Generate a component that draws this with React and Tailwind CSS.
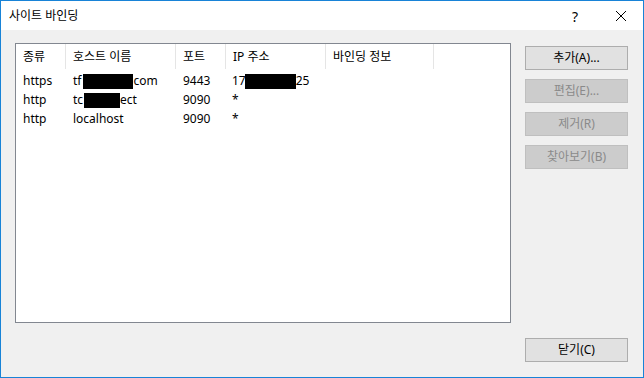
import React from 'react';

const font = { fontFamily: '"Noto Sans", "Noto Sans CJK KR", sans-serif' };

const columns = [
  { label: '종류', w: 'w-[50px]' },
  { label: '호스트 이름', w: 'w-[110px]' },
  { label: '포트', w: 'w-[50px]' },
  { label: 'IP 주소', w: 'w-[100px]' },
  { label: '바인딩 정보', w: 'w-[108px]' },
];

const Redact = ({ w }) => (
  <span className={`inline-block h-[15px] bg-black align-middle ${w}`} />
);

const rows = [
  {
    type: 'https',
    host: (
      <>
        tf<Redact w="w-[50px] ml-[2px]" />com
      </>
    ),
    port: '9443',
    ip: (
      <>
        17<Redact w="w-[51px] -ml-[1px]" />25
      </>
    ),
  },
  {
    type: 'http',
    host: (
      <>
        tc<Redact w="w-[36px] ml-[1px]" />ect
      </>
    ),
    port: '9090',
    ip: '*',
  },
  { type: 'http', host: 'localhost', port: '9090', ip: '*' },
];

const Button = ({ children, disabled }) => (
  <button
    className={`h-[24px] w-[103px] border text-[12px] leading-none ${
      disabled
        ? 'border-[#bfbfbf] bg-[#cccccc] text-[#8a8a8a]'
        : 'border-[#adadad] bg-[#e1e1e1] text-black'
    }`}
  >
    {children}
  </button>
);

export default function App() {
  return (
    <div
      className="flex h-[378px] w-[644px] flex-col border border-[#1883d7] bg-[#f0f0f0] text-[12px] text-black"
      style={font}
    >
      {/* title bar */}
      <div className="flex h-[29px] items-center bg-white pl-[8px] pt-[1px]">
        <span className="flex-1">사이트 바인딩</span>
        <span className="mr-[37px] text-[14px]">?</span>
        <svg width="12" height="12" viewBox="0 0 12 12" className="mr-[16px]">
          <path d="M1 1 L11 11 M11 1 L1 11" stroke="#000" strokeWidth="1" />
        </svg>
      </div>

      <div className="flex pl-[14px] pr-[15px] pt-[13px]">
        {/* list */}
        <div className="h-[280px] w-[496px] border border-[#828790] bg-white">
          <div className="flex h-[25px]">
            {columns.map((c) => (
              <div
                key={c.label}
                className={`${c.w} flex items-center border-r border-[#e5e5e5] pl-[7px] pt-[1px]`}
              >
                {c.label}
              </div>
            ))}
          </div>
          <div className="pt-[2px]">
            {rows.map((r, i) => (
              <div key={i} className="flex h-[19px] items-center whitespace-nowrap">
                <div className="w-[50px] pl-[7px]">{r.type}</div>
                <div className="w-[110px] pl-[7px]">{r.host}</div>
                <div className="w-[50px] pl-[7px]">{r.port}</div>
                <div className="w-[100px] pl-[6px]">{r.ip}</div>
              </div>
            ))}
          </div>
        </div>

        {/* side buttons */}
        <div className="ml-[14px] flex flex-col gap-[9px] pt-[3px]">
          <Button>추가(A)...</Button>
          <Button disabled>편집(E)...</Button>
          <Button disabled>제거(R)</Button>
          <Button disabled>찾아보기(B)</Button>
        </div>
      </div>

      <div className="flex justify-end pr-[15px] pt-[15px]">
        <Button>닫기(C)</Button>
      </div>
    </div>
  );
}
